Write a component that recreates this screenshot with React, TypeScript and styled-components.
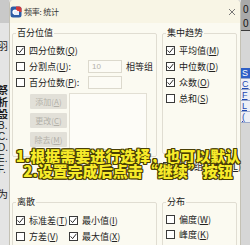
import React from "react";
import styled, { createGlobalStyle } from "styled-components";

const Global = createGlobalStyle`
  html, body { margin: 0; padding: 0; background: #e2e2e2; }
  body {
    width: 250px; height: 245px; overflow: hidden;
    font-family: "Noto Sans CJK SC", "Noto Sans", sans-serif;
  }
`;

const Screen = styled.div`
  position: relative;
  width: 250px;
  height: 245px;
  overflow: hidden;
  display: flex;
`;

/* ---------- background windows ---------- */
const LeftStrip = styled.div`
  width: 9px;
  flex: none;
  background: #e4e4e4;
  display: flex;
  flex-direction: column;
  overflow: hidden;
`;
const LeftTop = styled.div`
  height: 23px;
  background: #c9c9c9;
  flex: none;
`;
const StripCell = styled.div<{ $h: number; $bold?: boolean }>`
  height: ${(p) => p.$h}px;
  flex: none;
  font-size: 10px;
  line-height: ${(p) => p.$h}px;
  font-weight: ${(p) => (p.$bold ? 700 : 400)};
  color: #1a1a1a;
  white-space: nowrap;
  margin-left: -2px;
  font-family: "Liberation Sans", "Noto Sans CJK SC", sans-serif;
`;

const RightStrip = styled.div`
  width: 9px;
  flex: none;
  background: #d6d6d6;
  display: flex;
  flex-direction: column;
  overflow: hidden;
`;
const RightTop = styled.div`
  height: 31px;
  flex: none;
  background: #a9a9a9;
  border-bottom: 1px solid #3c3c3c;
  font-family: "Liberation Sans", sans-serif;
  font-size: 10px;
  line-height: 14px;
  color: #111;
  padding-top: 3px;
  box-sizing: border-box;
  padding-left: 2px;
`;
const RightGap = styled.div`
  height: 37px;
  flex: none;
`;
const RightRow = styled.div<{ $sel?: boolean }>`
  height: 11px;
  flex: none;
  box-sizing: border-box;
  padding-left: 1px;
  font-family: "Liberation Sans", sans-serif;
  font-size: 9px;
  line-height: 10px;
  color: ${(p) => (p.$sel ? "#fff" : "#1f48b0")};
  background: ${(p) => (p.$sel ? "#2f5fc6" : "#eef0f6")};
  border-bottom: 1px solid #9aa8cc;
  text-decoration: ${(p) => (p.$sel ? "none" : "underline")};
`;

/* ---------- dialog ---------- */
const Dialog = styled.div`
  width: 232px;
  flex: none;
  box-sizing: border-box;
  background: #fbfaf1;
  border-left: 1px solid #c4c1b4;
  border-right: 1px solid #c4c1b4;
  border-radius: 4px 4px 0 0;
  display: flex;
  flex-direction: column;
`;
const TitleBar = styled.div`
  height: 23px;
  flex: none;
  display: flex;
  align-items: center;
  gap: 2px;
  padding-right: 4px;
  background: #f8f5e5;
  border-radius: 4px 4px 0 0;
`;
const TitleText = styled.span`
  font-size: 8px;
  color: #333;
  flex: 1;
  letter-spacing: -0.2px;
`;

const Body = styled.div`
  display: grid;
  grid-template-columns: 145px 75px;
  column-gap: 5px;
  row-gap: 22px;
  padding-left: 2px;
  margin-top: 4px;
`;

const Group = styled.fieldset<{ $h: number }>`
  margin: 0;
  padding: 0 0 0 3px;
  min-width: 0;
  height: ${(p) => p.$h}px;
  box-sizing: border-box;
  border: 1px solid #e0ddd2;
  border-radius: 2px;
`;
const Legend = styled.legend`
  padding: 0 1px;
  margin-left: 0;
  font-size: 9px;
  line-height: 12px;
  color: #222;
`;

const Rows = styled.div<{ $top: number; $h: number }>`
  display: grid;
  grid-auto-rows: ${(p) => p.$h}px;
  margin-top: ${(p) => p.$top}px;
`;

const Row = styled.div`
  display: flex;
  align-items: center;
  font-size: 9px;
  color: #222;
  white-space: nowrap;
`;

const Box = styled.span`
  width: 9px;
  height: 9px;
  flex: none;
  box-sizing: border-box;
  border: 1px solid #3a3a3a;
  background: #fff;
  margin-right: 4px;
  display: inline-flex;
  align-items: center;
  justify-content: center;
`;

const Key = styled.span`
  text-decoration: underline;
  text-underline-offset: 1px;
`;

const Check: React.FC<{ on?: boolean; label: React.ReactNode }> = ({ on, label }) => (
  <Row>
    <Box>
      {on && (
        <svg width="7" height="7" viewBox="0 0 7 7">
          <path d="M0.6 3.4 L2.6 5.6 L6.4 0.8" fill="none" stroke="#2a2a2a" strokeWidth="1" />
        </svg>
      )}
    </Box>
    <span>{label}</span>
  </Row>
);

const PctRow = styled.div`
  display: grid;
  grid-template-columns: 68px 34px auto;
  column-gap: 4px;
  align-items: center;
`;
const Field = styled.div`
  height: 13px;
  box-sizing: border-box;
  border: 1px solid #dcd9cd;
  background: #fcfbf5;
  font-family: "Liberation Sans", sans-serif;
  font-size: 8px;
  line-height: 11px;
  padding-left: 3px;
  color: #b4b2aa;
`;
const SideText = styled.span`
  font-size: 9px;
  color: #222;
`;

const ListArea = styled.div`
  display: grid;
  grid-template-columns: 37px 78px;
  column-gap: 2px;
  margin-left: 14px;
  margin-top: 3px;
`;
const Buttons = styled.div`
  display: flex;
  flex-direction: column;
  gap: 4px;
  padding-top: 1px;
`;
const Btn = styled.div`
  height: 15px;
  background: #e2e0d8;
  color: #b3b1a9;
  font-size: 8px;
  line-height: 15px;
  text-align: center;
  border-radius: 1px;
`;
const ListBox = styled.div`
  height: 57px;
  box-sizing: border-box;
  border: 1px solid #e2dfd4;
  background: #fdfcf7;
`;

const RightCol = styled.div`
  display: flex;
  flex-direction: column;
`;
const MidRow = styled.div`
  margin-top: 4px;
  height: 16px;
  display: flex;
  margin-left: 1px;
`;

const TwoCol = styled.div`
  display: grid;
  grid-template-columns: 53px auto;
  grid-auto-rows: 16px;
  margin-top: 4px;
`;

/* ---------- annotation ---------- */
const Note = styled.div`
  position: absolute;
  left: 0;
  top: 148px;
  width: 256px;
  text-align: center;
  font-family: "Noto Sans CJK SC", sans-serif;
  font-weight: 900;
  font-size: 15px;
  line-height: 15px;
  color: #f7eb2a;
  letter-spacing: 0;
  text-shadow:
    1px 0 0 #4a3f05, -1px 0 0 #4a3f05, 0 1px 0 #4a3f05, 0 -1px 0 #4a3f05,
    1px 1px 0 #4a3f05, -1px -1px 0 #4a3f05, 1px -1px 0 #4a3f05, -1px 1px 0 #4a3f05;
  pointer-events: none;
`;

const AppIcon = () => (
  <svg width="12" height="12" viewBox="0 0 12 12">
    <rect x="0.5" y="0.5" width="11" height="11" rx="2.5" fill="#2d5ca6" />
    <path d="M6 0.5 H9 A2.5 2.5 0 0 1 11.5 3 V6 H6 Z" fill="#d33a3a" />
    <circle cx="5" cy="6" r="2.6" fill="#fff" />
    <rect x="4" y="5" width="5" height="4" fill="#e8eefa" />
  </svg>
);

const CloseX = () => (
  <svg width="8" height="8" viewBox="0 0 8 8">
    <path d="M1 1 L7 7 M7 1 L1 7" stroke="#6a6a6a" strokeWidth="0.9" />
  </svg>
);

export default function App() {
  return (
    <>
      <Global />
      <Screen>
        <LeftStrip>
          <LeftTop />
          <StripCell $h={19} />
          <StripCell $h={10}>羽</StripCell>
          <StripCell $h={33} />
          <StripCell $h={12} $bold>祭</StripCell>
          <StripCell $h={12} $bold>析</StripCell>
          <StripCell $h={11} $bold>設</StripCell>
          <StripCell $h={11}>B.</StripCell>
          <StripCell $h={11}>C.</StripCell>
          <StripCell $h={11}>D.</StripCell>
          <StripCell $h={11}>E.</StripCell>
          <StripCell $h={11}>F.</StripCell>
          <StripCell $h={14} />
          <StripCell $h={12}>为</StripCell>
        </LeftStrip>

        <Dialog>
          <TitleBar>
            <AppIcon />
            <TitleText>频率: 统计</TitleText>
            <CloseX />
          </TitleBar>

          <Body>
            <Group $h={130}>
              <Legend>百分位值</Legend>
              <Rows $top={3} $h={16}>
                <Check on label={<>四分位数(<Key>Q</Key>)</>} />
                <PctRow>
                  <Check label={<>分割点(<Key>U</Key>):</>} />
                  <Field>10</Field>
                  <SideText>相等组</SideText>
                </PctRow>
                <PctRow>
                  <Check label={<>百分位数(<Key>P</Key>):</>} />
                  <Field />
                </PctRow>
              </Rows>
              <ListArea>
                <Buttons>
                  <Btn>添加(<Key>A</Key>)</Btn>
                  <Btn>更改(<Key>C</Key>)</Btn>
                  <Btn>除去(<Key>M</Key>)</Btn>
                </Buttons>
                <ListBox />
              </ListArea>
            </Group>

            <RightCol>
              <Group $h={127}>
                <Legend>集中趋势</Legend>
                <Rows $top={3} $h={16}>
                  <Check on label={<>平均值(<Key>M</Key>)</>} />
                  <Check on label={<>中位数(<Key>D</Key>)</>} />
                  <Check on label={<>众数(<Key>O</Key>)</>} />
                  <Check label={<>总和(<Key>S</Key>)</>} />
                </Rows>
              </Group>
              <MidRow>
                <Check label={<>值为组的中点(<Key>L</Key>)</>} />
              </MidRow>
            </RightCol>

            <Group $h={66}>
              <Legend>离散</Legend>
              <TwoCol>
                <Check on label={<>标准差(<Key>T</Key>)</>} />
                <Check on label={<>最小值(<Key>I</Key>)</>} />
                <Check label={<>方差(<Key>V</Key>)</>} />
                <Check on label={<>最大值(<Key>X</Key>)</>} />
                <Check label={<>范围(<Key>N</Key>)</>} />
                <Check label={<>标准误差平均值(<Key>E</Key>)</>} />
              </TwoCol>
            </Group>

            <Group $h={64}>
              <Legend>分布</Legend>
              <Rows $top={4} $h={15}>
                <Check label={<>偏度(<Key>W</Key>)</>} />
                <Check label={<>峰度(<Key>K</Key>)</>} />
              </Rows>
            </Group>
          </Body>
        </Dialog>

        <RightStrip>
          <RightTop>
            0<br />0
          </RightTop>
          <RightGap />
          <RightRow $sel>S</RightRow>
          <RightRow>C</RightRow>
          <RightRow>F</RightRow>
          <RightRow>L</RightRow>
          <RightRow>(</RightRow>
        </RightStrip>

        <Note>
          1.根据需要进行选择，也可以默认
          <br />
          2.设置完成后点击“继续”按钮
        </Note>
      </Screen>
    </>
  );
}
